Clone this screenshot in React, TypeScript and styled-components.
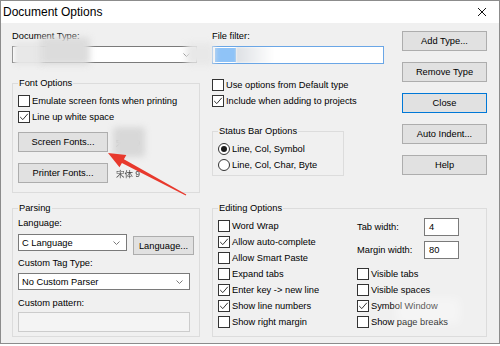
import styled, { createGlobalStyle } from 'styled-components';

const GlobalStyle = createGlobalStyle`
  html, body {
    margin: 0;
    padding: 0;
    background: #ffffff;
  }
  body {
    font-family: 'Liberation Sans', 'Noto Sans CJK SC', Arial, sans-serif;
  }
  * {
    box-sizing: border-box;
  }
`;

const Window = styled.div`
  position: relative;
  width: 500px;
  height: 344px;
  border: 1px solid #8c8c8c;
  background: #f0f0f0;
  display: flex;
  flex-direction: column;
  font-size: 9.3px;
  color: #000;
  overflow: hidden;
`;

const TitleBar = styled.div`
  flex: none;
  height: 22px;
  background: #ffffff;
  display: flex;
  align-items: center;
  justify-content: space-between;
  padding-left: 2px;
`;

const Title = styled.span`
  font-size: 12px;
  line-height: 14px;
`;

const CloseGlyph = styled.div`
  width: 34px;
  height: 22px;
  display: flex;
  align-items: center;
  justify-content: center;
`;

const Body = styled.div`
  flex: 1;
  display: flex;
  flex-direction: column;
  padding: 7px 12px 0 11px;
`;

const TopSection = styled.div`
  display: flex;
  align-items: flex-start;
`;

const Column = styled.div<{ $w: number; $ml?: number }>`
  flex: none;
  width: ${p => p.$w}px;
  margin-left: ${p => p.$ml ?? 0}px;
  display: flex;
  flex-direction: column;
`;

const ButtonColumn = styled.div`
  flex: none;
  width: 85px;
  margin-left: auto;
  margin-top: 1px;
  display: flex;
  flex-direction: column;
  gap: 11px;
`;

const BottomSection = styled.div`
  display: flex;
  gap: 12px;
  margin-top: 9px;
`;

const FieldLabel = styled.div<{ $mt?: number }>`
  line-height: 13px;
  margin-top: ${p => p.$mt ?? 0}px;
  white-space: nowrap;
`;

const Combo = styled.div<{ $w: number; $mt?: number }>`
  flex: none;
  width: ${p => p.$w}px;
  height: 17px;
  margin-top: ${p => p.$mt ?? 0}px;
  background: #ffffff;
  border: 1px solid #7a7a7a;
  display: flex;
  align-items: center;
  justify-content: space-between;
  padding: 0 6px 0 3px;
  white-space: nowrap;
`;

const TextBox = styled.div<{ $w: number; $h: number; $mt?: number; $focus?: boolean; $disabled?: boolean }>`
  flex: none;
  width: ${p => p.$w}px;
  height: ${p => p.$h}px;
  margin-top: ${p => p.$mt ?? 0}px;
  background: ${p => (p.$disabled ? '#f4f4f4' : '#ffffff')};
  border: 1px solid ${p => (p.$focus ? '#6aa6e6' : p.$disabled ? '#cccccc' : '#7a7a7a')};
  display: flex;
  align-items: center;
  padding-left: ${p => (p.$focus ? 2 : 4)}px;
  overflow: hidden;
`;

const Selection = styled.span`
  width: 21px;
  height: 14px;
  background: #8fc3f7;
  flex: none;
`;

const SelectionFade = styled.span`
  width: 38px;
  height: 16px;
  background: linear-gradient(90deg, #dde0e4, #ffffff);
  filter: blur(1px);
  flex: none;
`;

const PushButton = styled.button<{ $w?: number; $h?: number; $mt?: number; $ml?: number; $default?: boolean }>`
  flex: none;
  width: ${p => (p.$w ? `${p.$w}px` : '100%')};
  height: ${p => p.$h ?? 20}px;
  margin: ${p => p.$mt ?? 0}px 0 0 ${p => p.$ml ?? 0}px;
  padding: 0;
  font: inherit;
  color: #000;
  background: #e1e1e1;
  border: 1px solid ${p => (p.$default ? '#0078d7' : '#adadad')};
  display: flex;
  align-items: center;
  justify-content: center;
  white-space: nowrap;
`;

const GroupBox = styled.fieldset<{ $w?: number; $mt?: number; $pb?: number; $grow?: boolean }>`
  flex: ${p => (p.$grow ? '1' : 'none')};
  width: ${p => (p.$w ? `${p.$w}px` : 'auto')};
  margin: ${p => p.$mt ?? 0}px 0 0 0;
  padding: 0 5px ${p => p.$pb ?? 0}px 5px;
  border: 1px solid #dcdcdc;
  min-width: 0;
`;

const GroupTitle = styled.legend`
  padding: 0 1px;
  margin-left: 0;
  line-height: 13px;
  white-space: nowrap;
`;

const CheckRow = styled.div<{ $mt?: number }>`
  display: flex;
  align-items: center;
  gap: 2px;
  height: 16px;
  margin-top: ${p => p.$mt ?? 0}px;
  white-space: nowrap;
`;

const Box = styled.span`
  flex: none;
  width: 12px;
  height: 12px;
  background: #ffffff;
  border: 1px solid #333333;
  display: flex;
  align-items: center;
  justify-content: center;
`;

const RadioRing = styled.span`
  flex: none;
  width: 12px;
  height: 12px;
  border-radius: 50%;
  background: #ffffff;
  border: 1px solid #333333;
  display: flex;
  align-items: center;
  justify-content: center;
`;

const RadioDot = styled.span`
  width: 6px;
  height: 6px;
  border-radius: 50%;
  background: #1a1a1a;
`;

const RadioList = styled.div`
  display: flex;
  flex-direction: column;
  margin-top: 3px;
`;

const ButtonRow = styled.div<{ $mt?: number }>`
  display: flex;
  align-items: center;
  gap: 8px;
  margin-top: ${p => p.$mt ?? 0}px;
`;

const FontName = styled.span`
  font-size: 8.5px;
  color: #444;
  filter: blur(0.3px);
  white-space: nowrap;
`;

const InlineRow = styled.div<{ $mt?: number }>`
  display: flex;
  align-items: flex-start;
  margin-top: ${p => p.$mt ?? 0}px;
`;

const EditGrid = styled.div`
  display: grid;
  grid-template-columns: 139px 1fr;
  margin-top: 3px;
`;

const Stack = styled.div`
  display: flex;
  flex-direction: column;
`;

const NumberRow = styled.div<{ $mt?: number }>`
  display: flex;
  align-items: center;
  margin-top: ${p => p.$mt ?? 0}px;
`;

const NumberLabel = styled.span`
  width: 67px;
  white-space: nowrap;
`;

const Overlay = styled.div`
  position: absolute;
  left: -1px;
  top: -1px;
  width: 500px;
  height: 346px;
  pointer-events: none;
`;

const Smudge = styled.div<{ $x: number; $y: number; $w: number; $h: number; $c: string; $b: number }>`
  position: absolute;
  left: ${p => p.$x}px;
  top: ${p => p.$y}px;
  width: ${p => p.$w}px;
  height: ${p => p.$h}px;
  background: ${p => p.$c};
  filter: blur(${p => p.$b}px);
  border-radius: 4px;
`;

const ArrowLayer = styled.svg`
  position: absolute;
  left: 0;
  top: 0;
`;

const Chevron = () => (
  <svg width="7" height="4" viewBox="0 0 7 4">
    <path d="M0.5 0.5 L3.5 3.5 L6.5 0.5" fill="none" stroke="#7a7a7a" strokeWidth="1" />
  </svg>
);

const Check = ({ label, checked, mt }: { label: string; checked?: boolean; mt?: number }) => (
  <CheckRow $mt={mt}>
    <Box>
      {checked && (
        <svg width="10" height="10" viewBox="0 0 10 10">
          <path d="M1.2 5 L3.8 7.6 L8.8 1.8" fill="none" stroke="#333" strokeWidth="1" />
        </svg>
      )}
    </Box>
    <span>{label}</span>
  </CheckRow>
);

const Radio = ({ label, checked }: { label: string; checked?: boolean }) => (
  <CheckRow>
    <RadioRing>{checked && <RadioDot />}</RadioRing>
    <span>{label}</span>
  </CheckRow>
);

const App = () => {
  return (
    <>
      <GlobalStyle />
      <Window>
        <TitleBar>
          <Title>Document Options</Title>
          <CloseGlyph>
            <svg width="10" height="10" viewBox="0 0 10 10">
              <path d="M1 1 L9 9 M9 1 L1 9" stroke="#111" strokeWidth="1" />
            </svg>
          </CloseGlyph>
        </TitleBar>
        <Body>
          <TopSection>
            <Column $w={188}>
              <FieldLabel>Document Type:</FieldLabel>
              <Combo $w={185} $mt={3}>
                <span />
                <Chevron />
              </Combo>
              <GroupBox $mt={14} $pb={9}>
                <GroupTitle>Font Options</GroupTitle>
                <Check label="Emulate screen fonts when printing" mt={3} />
                <Check label="Line up white space" checked />
                <ButtonRow $mt={7}>
                  <PushButton $w={90}>Screen Fonts...</PushButton>
                  <FontName>宋体 9</FontName>
                </ButtonRow>
                <ButtonRow $mt={11}>
                  <PushButton $w={90}>Printer Fonts...</PushButton>
                  <FontName>宋体 9</FontName>
                </ButtonRow>
              </GroupBox>
            </Column>
            <Column $w={172} $ml={12}>
              <FieldLabel>File filter:</FieldLabel>
              <TextBox $w={172} $h={18} $mt={3} $focus>
                <Selection />
                <SelectionFade />
              </TextBox>
              <Check label="Use options from Default type" mt={13} />
              <Check label="Include when adding to projects" checked />
              <GroupBox $w={132} $mt={16} $pb={2}>
                <GroupTitle>Status Bar Options</GroupTitle>
                <RadioList>
                  <Radio label="Line, Col, Symbol" checked />
                  <Radio label="Line, Col, Char, Byte" />
                </RadioList>
              </GroupBox>
            </Column>
            <ButtonColumn>
              <PushButton>Add Type...</PushButton>
              <PushButton>Remove Type</PushButton>
              <PushButton $default>Close</PushButton>
              <PushButton>Auto Indent...</PushButton>
              <PushButton>Help</PushButton>
            </ButtonColumn>
          </TopSection>
          <BottomSection>
            <GroupBox $w={188} $pb={4}>
              <GroupTitle>Parsing</GroupTitle>
              <FieldLabel $mt={2}>Language:</FieldLabel>
              <InlineRow $mt={4}>
                <Combo $w={109}>
                  <span>C Language</span>
                  <Chevron />
                </Combo>
                <PushButton $w={61} $h={19} $mt={2} $ml={6}>
                  Language...
                </PushButton>
              </InlineRow>
              <FieldLabel $mt={2}>Custom Tag Type:</FieldLabel>
              <Combo $w={172} $mt={3}>
                <span>No Custom Parser</span>
                <Chevron />
              </Combo>
              <FieldLabel $mt={7}>Custom pattern:</FieldLabel>
              <TextBox $w={172} $h={20} $mt={2} $disabled />
            </GroupBox>
            <GroupBox $grow $pb={2}>
              <GroupTitle>Editing Options</GroupTitle>
              <EditGrid>
                <Stack>
                  <Check label="Word Wrap" />
                  <Check label="Allow auto-complete" checked />
                  <Check label="Allow Smart Paste" />
                  <Check label="Expand tabs" />
                  <Check label="Enter key -> new line" checked />
                  <Check label="Show line numbers" checked />
                  <Check label="Show right margin" />
                </Stack>
                <Stack>
                  <NumberRow>
                    <NumberLabel>Tab width:</NumberLabel>
                    <TextBox $w={35} $h={18}>4</TextBox>
                  </NumberRow>
                  <NumberRow $mt={5}>
                    <NumberLabel>Margin width:</NumberLabel>
                    <TextBox $w={35} $h={18}>80</TextBox>
                  </NumberRow>
                  <Check label="Visible tabs" mt={7} />
                  <Check label="Visible spaces" />
                  <Check label="Symbol Window" checked />
                  <Check label="Show page breaks" />
                </Stack>
              </EditGrid>
            </GroupBox>
          </BottomSection>
        </Body>
        <Overlay>
          <Smudge $x={14} $y={42} $w={30} $h={24} $c="#e8e8e8" $b={2} />
          <Smudge $x={40} $y={37} $w={50} $h={28} $c="#dcdcdc" $b={3} />
          <Smudge $x={186} $y={43} $w={28} $h={22} $c="#e8e8e8" $b={3} />
          <Smudge $x={113} $y={127} $w={32} $h={30} $c="#d8d8d8" $b={3} />
          <Smudge $x={396} $y={298} $w={64} $h={26} $c="rgba(255,255,255,0.35)" $b={4} />
          <ArrowLayer width="500" height="346" viewBox="0 0 500 346">
            <polygon
              points="108,153 126.3,155 123.9,159.3 186.3,194.4 185.7,195.6 121.9,162.9 119.5,167.2"
              fill="#e8392d"
            />
          </ArrowLayer>
        </Overlay>
      </Window>
    </>
  );
};

export default App;
